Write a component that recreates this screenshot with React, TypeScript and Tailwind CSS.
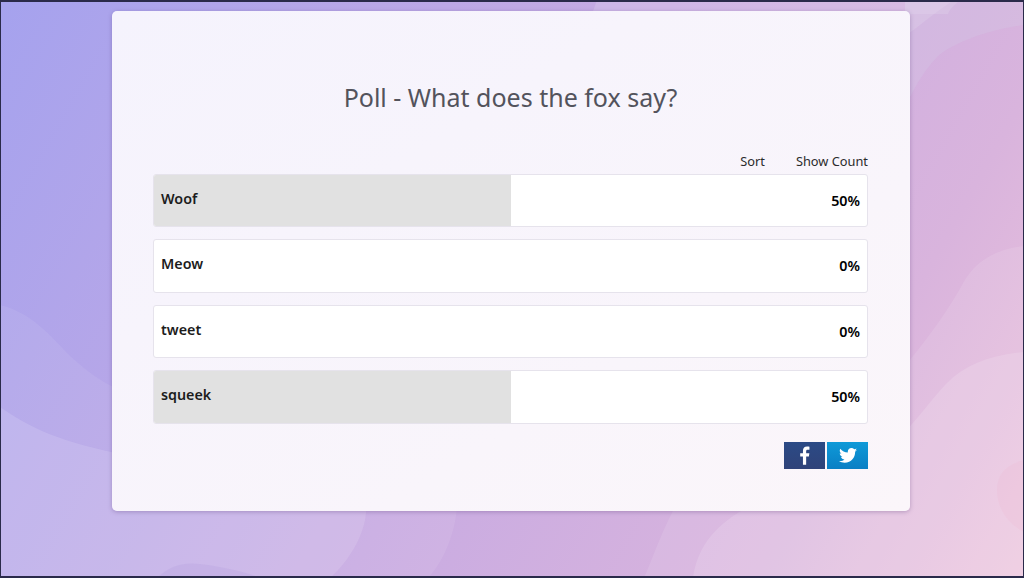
const options = [
  { label: 'Woof', pct: 50 },
  { label: 'Meow', pct: 0 },
  { label: 'tweet', pct: 0 },
  { label: 'squeek', pct: 50 },
]

function Backdrop() {
  return (
    <svg className="absolute inset-0 w-full h-full" viewBox="0 0 1024 578" preserveAspectRatio="none">
      <defs>
        <linearGradient id="bg" gradientUnits="userSpaceOnUse" x1="0" y1="0" x2="1024" y2="578">
          <stop offset="0" stopColor="#a5a2ee" />
          <stop offset="0.5" stopColor="#c8abe2" />
          <stop offset="0.8" stopColor="#d9b4dd" />
          <stop offset="1" stopColor="#ecc2dc" />
        </linearGradient>
      </defs>
      <rect width="1024" height="578" fill="url(#bg)" />
      {/* left waves */}
      <path d="M0 305 C30 312 50 335 67 353 C85 370 100 382 130 395 L130 456 C60 442 30 428 0 407 Z" fill="#fff" opacity="0.07" />
      <path d="M0 407 C30 428 60 442 130 456 C220 470 330 490 366 505 C368 530 350 560 330 578 L0 578 Z" fill="#fff" opacity="0.19" />
      <path d="M366 505 L457 505 C456 530 445 560 428 578 L330 578 C350 560 368 530 366 505 Z" fill="#fff" opacity="0.08" />
      <path d="M157 578 C170 565 185 562 200 564 C225 567 245 572 261 578 Z" fill="#a98ed8" opacity="0.18" />
      {/* top */}
      <path d="M597 0 L960 0 C955 5 950 8 948 14 L592 14 Z" fill="#fff" opacity="0.14" />
      <path d="M954 0 C935 12 925 22 905 36 L905 0 Z" fill="#fff" opacity="0.14" />
      {/* right waves */}
      <path d="M905 108 C915 85 925 70 937 57 C950 45 985 30 1024 25 L1024 0 L905 0 Z" fill="#d3cfe9" opacity="0.25" />
      <path d="M905 366 C925 342 945 315 961 287 C972 265 990 250 1024 246 L1024 578 L644 578 C652 560 660 535 676 505 L905 505 Z" fill="#fff" opacity="0.1" />
      <path d="M905 432 C925 410 935 395 947 383 C965 365 990 355 1024 352 L1024 578 L693 578 C697 550 712 525 752 505 L905 505 Z" fill="#fff" opacity="0.14" />
      <path d="M1024 460 C1005 465 997 475 997 490 C997 510 1010 525 1024 532 Z" fill="#f0a8c8" opacity="0.14" />
    </svg>
  )
}

export default function App() {
  return (
    <div className="relative w-full h-[578px] overflow-hidden font-['Noto_Sans','Open_Sans',sans-serif]">
      <Backdrop />
      <div className="absolute inset-0 border-y-2 border-x border-[#2a2a4a] pointer-events-none z-10" />
      <div className="relative flex pl-[112px] pt-[11px]">
        <div className="w-[798px] h-[500px] rounded-[5px] bg-gradient-to-br from-[#f5f3fd] to-[#fbf6fa] shadow-[0_1px_4px_rgba(90,60,120,0.35)] pl-[41px] pr-[42px] pt-[66px]">
          <h1 className="text-center text-[25px] leading-[40px] text-[#53535c]">Poll - What does the fox say?</h1>
          <div className="flex justify-end gap-[31px] mt-[34px] text-[12.8px] leading-[20px] text-[#2b2b2b]">
            <span>Sort</span>
            <span>Show Count</span>
          </div>
          <div className="flex flex-col gap-[12px] mt-[3px]">
            {options.map((o) => (
              <div key={o.label} className="relative h-[53.4px] bg-white border border-[#e6e3ec] rounded-[3px] overflow-hidden">
                {o.pct > 0 && <div className="absolute inset-y-0 left-0 bg-[#e1e1e1]" style={{ width: `${o.pct}%` }} />}
                <div className="relative flex justify-between h-full px-[7px] text-[14.3px] font-semibold text-black">
                  <span className="mt-[14px] leading-[20px] text-[#1c1c1c]">{o.label}</span>
                  <span className="mt-[16px] leading-[20px]">{o.pct}%</span>
                </div>
              </div>
            ))}
          </div>
          <div className="flex justify-end gap-[2px] mt-[18px]">
            <div className="w-[41px] h-[27px] flex items-center justify-center bg-gradient-to-b from-[#2b4a86] to-[#2f4379]">
              <svg width="11" height="19" viewBox="0 0 12 20">
                <path fill="#fff" d="M7.8 20V11h3l.5-3.5H7.8V5.3c0-1 .3-1.7 1.700-1.700h1.900V.5C11 .4 10 .3 8.800.3 6.100.3 4.300 1.900 4.300 4.900v2.600H1.300V11h3v9z" />
              </svg>
            </div>
            <div className="w-[41px] h-[27px] flex items-center justify-center bg-gradient-to-b from-[#0f9ad8] to-[#0a7fc4]">
              <svg width="18" height="15" viewBox="0 0 24 20">
                <path fill="#fff" d="M24 2.400c-.9.400-1.800.7-2.800.8 1-.6 1.800-1.600 2.200-2.700-1 .6-2 1-3.100 1.200C19.300.7 18 .1 16.600.1c-2.700 0-4.900 2.200-4.900 4.900 0 .4 0 .8.100 1.100C7.700 5.900 4.100 4 1.700.9c-.4.700-.7 1.600-.7 2.500 0 1.700.9 3.200 2.200 4.100-.8 0-1.600-.2-2.200-.6v.1c0 2.400 1.700 4.400 3.900 4.800-.4.100-.8.200-1.300.2-.3 0-.6 0-.9-.1.600 2 2.400 3.400 4.600 3.400-1.700 1.300-3.800 2.100-6.100 2.100-.4 0-.8 0-1.200-.1 2.200 1.400 4.800 2.200 7.500 2.200 9.100 0 14-7.500 14-14v-.6c1-.7 1.800-1.600 2.500-2.500z" />
              </svg>
            </div>
          </div>
        </div>
      </div>
    </div>
  )
}
